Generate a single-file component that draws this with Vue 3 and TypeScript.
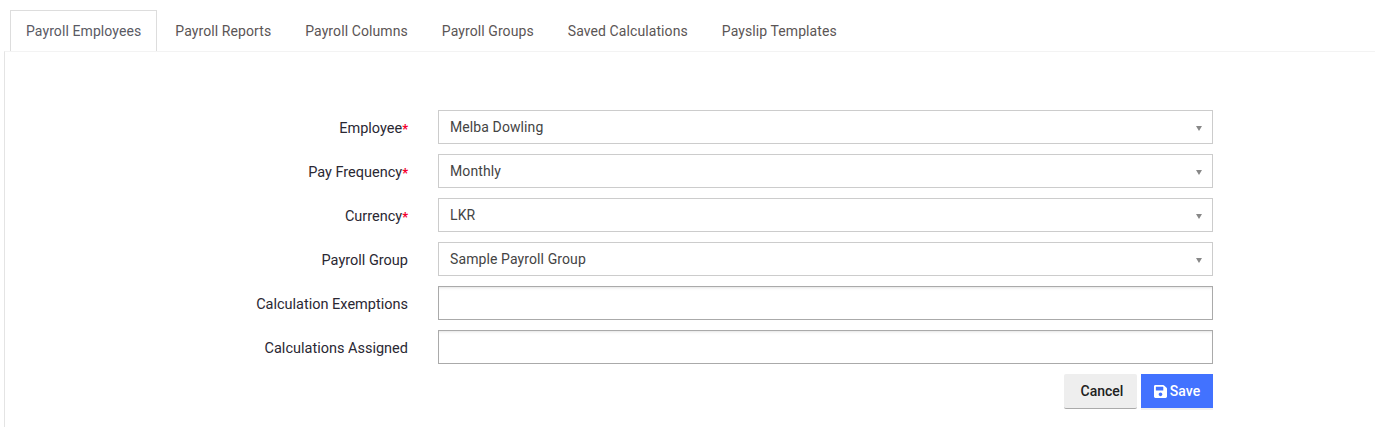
<script setup lang="ts">
interface Row { label: string; required: boolean; value?: string }
const tabs: string[] = ['Payroll Employees', 'Payroll Reports', 'Payroll Columns', 'Payroll Groups', 'Saved Calculations', 'Payslip Templates']
const rows: Row[] = [
  { label: 'Employee', required: true, value: 'Melba Dowling' },
  { label: 'Pay Frequency', required: true, value: 'Monthly' },
  { label: 'Currency', required: true, value: 'LKR' },
  { label: 'Payroll Group', required: false, value: 'Sample Payroll Group' },
  { label: 'Calculation Exemptions', required: false },
  { label: 'Calculations Assigned', required: false },
]
</script>

<template>
  <div class="page">
    <ul class="tabs">
      <li v-for="(t, i) in tabs" :key="t" class="tab" :class="{ active: i === 0 }">{{ t }}</li>
    </ul>
    <div class="panel">
      <form class="form" @submit.prevent>
        <div v-for="r in rows" :key="r.label" class="row">
          <label class="label">{{ r.label }}<span v-if="r.required" class="req">*</span></label>
          <div v-if="r.value" class="select">
            <span>{{ r.value }}</span>
            <i class="caret"></i>
          </div>
          <div v-else class="multi"></div>
        </div>
        <div class="actions">
          <button type="button" class="btn cancel">Cancel</button>
          <button type="button" class="btn save">
            <svg class="ico" viewBox="0 0 448 512" width="13" height="15" aria-hidden="true">
              <path fill="#fff" d="M433.9 129.9l-83.9-83.9A48 48 0 0 0 316.1 32H48C21.5 32 0 53.5 0 80v352c0 26.5 21.5 48 48 48h352c26.5 0 48-21.5 48-48V163.900a48 48 0 0 0-14.100-34zM224 416c-35.300 0-64-28.700-64-64 0-35.300 28.700-64 64-64s64 28.700 64 64c0 35.300-28.700 64-64 64zm96-304.500V212c0 6.600-5.400 12-12 12H76c-6.600 0-12-5.400-12-12V108c0-6.600 5.400-12 12-12h228.500c3.200 0 6.200 1.300 8.500 3.500l3.500 3.500c2.200 2.300 3.500 5.300 3.500 8.500z"/>
            </svg>
            <span class="save-text">Save</span>
          </button>
        </div>
      </form>
    </div>
  </div>
</template>

<style>
html, body { margin: 0; background: #fff; }
</style>

<style scoped>
.page {
  width: 1375px;
  height: 427px;
  overflow: hidden;
  background: #fff;
  font-family: Roboto, "Liberation Sans", sans-serif;
  font-size: 14px;
  box-sizing: border-box;
}
.tabs {
  list-style: none;
  margin: 0;
  padding: 10px 0 0 10px;
  display: flex;
  gap: 2px;
  height: 51px;
  box-sizing: border-box;
}
.tab {
  height: 41px;
  line-height: 41px;
  color: #5b5555;
  border: 1px solid transparent;
  border-bottom: 0;
  box-sizing: border-box;
  padding: 0 15px;
  letter-spacing: 0.09px;
}
.tab.active {
  border-color: #ddd;
  background: #fff;
  color: #5a5a64;
}
.panel {
  margin-left: 4px;
  height: 376px;
  border-left: 1px solid #e4e4e4;
  border-top: 1px solid #f3f3f3;
  box-sizing: border-box;
  padding-top: 58px;
}
.form {
  display: flex;
  flex-direction: column;
  gap: 10px;
  width: 1208px;
}
.row {
  display: flex;
  align-items: center;
  height: 34px;
}
.label {
  width: 403px;
  margin-right: 30px;
  text-align: right;
  color: #2a2833;
  flex: none;
  padding-top: 3px;
  font-size: 14.5px;
}
.req {
  color: #f5002f;
  font-weight: 900;
  font-size: 12.5px;
}
.select, .multi {
  width: 775px;
  height: 34px;
  box-sizing: border-box;
  background: #fff;
}
.select {
  border: 1px solid #ccc;
  padding: 0 10px 0 11px;
  display: flex;
  align-items: center;
  justify-content: space-between;
  color: #444;
  letter-spacing: 0.1px;
}
.multi {
  border: 1px solid #aaa;
  box-shadow: inset 0 3px 3px -2px #e4e4e4;
}
.caret {
  width: 0;
  height: 0;
  border-left: 3.5px solid transparent;
  border-right: 3.5px solid transparent;
  border-top: 5px solid #888;
  margin-top: 2px;
}
.actions {
  display: flex;
  justify-content: flex-end;
  align-items: flex-start;
  gap: 4px;
}
.btn {
  font-family: inherit;
  font-size: 14px;
  font-weight: 500;
  border: 0;
  padding: 0;
  cursor: pointer;
  box-sizing: border-box;
}
.cancel {
  width: 73px;
  height: 35px;
  background: #eee;
  color: #212121;
  border-radius: 2px;
  border-bottom: 1px solid #aaa;
  padding-left: 3px;
}
.save {
  width: 72px;
  height: 34px;
  background: #4272ff;
  color: #fff;
  display: flex;
  align-items: center;
  justify-content: center;
  gap: 3px;
  box-shadow: 0 2px 0 #f0f0f0;
}
.save-text { font-weight: 500; }
.ico { flex: none; }
</style>
